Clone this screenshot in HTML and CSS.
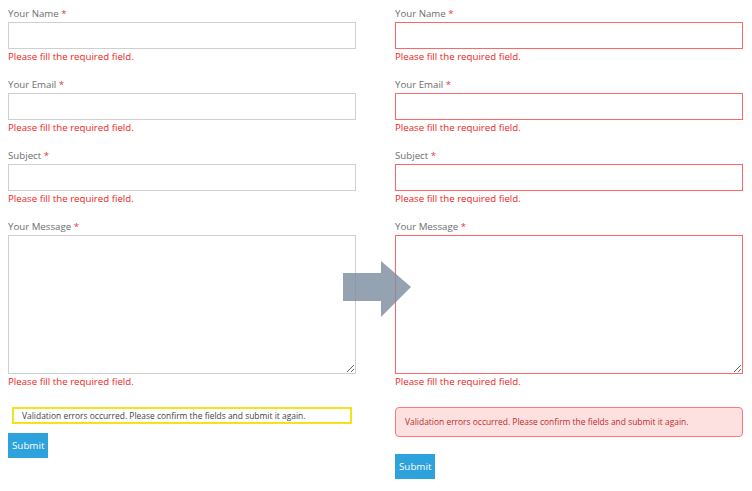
FILE: index.html
```html
<!DOCTYPE html>
<html lang="en">
<head>
  <meta charset="UTF-8">
  <meta name="viewport" content="width=device-width, initial-scale=1.0">
  <title>Contact form validation</title>
  <link rel="stylesheet" href="styles.css">
</head>
<body>
  <div class="compare">

    <!-- Before: default validation look -->
    <form class="contact-form">
      <div class="field">
        <label>Your Name <span class="req">*</span></label>
        <input type="text">
        <span class="field-error">Please fill the required field.</span>
      </div>
      <div class="field">
        <label>Your Email <span class="req">*</span></label>
        <input type="email">
        <span class="field-error">Please fill the required field.</span>
      </div>
      <div class="field">
        <label>Subject <span class="req">*</span></label>
        <input type="text">
        <span class="field-error">Please fill the required field.</span>
      </div>
      <div class="field">
        <label>Your Message <span class="req">*</span></label>
        <textarea></textarea>
        <span class="field-error">Please fill the required field.</span>
      </div>
      <p class="form-response">Validation errors occurred. Please confirm the fields and submit it again.</p>
      <button type="button" class="submit-btn">Submit</button>
    </form>

    <!-- After: styled invalid state -->
    <form class="contact-form contact-form--styled">
      <div class="field">
        <label>Your Name <span class="req">*</span></label>
        <input type="text">
        <span class="field-error">Please fill the required field.</span>
      </div>
      <div class="field">
        <label>Your Email <span class="req">*</span></label>
        <input type="email">
        <span class="field-error">Please fill the required field.</span>
      </div>
      <div class="field">
        <label>Subject <span class="req">*</span></label>
        <input type="text">
        <span class="field-error">Please fill the required field.</span>
      </div>
      <div class="field">
        <label>Your Message <span class="req">*</span></label>
        <textarea></textarea>
        <span class="field-error">Please fill the required field.</span>
      </div>
      <p class="form-response">Validation errors occurred. Please confirm the fields and submit it again.</p>
      <button type="button" class="submit-btn">Submit</button>
    </form>

    <svg class="arrow" width="70" height="58" viewBox="0 0 70 58">
      <polygon points="0,12 38,12 38,0 68,26 38,56 38,40 0,40"/>
    </svg>
  </div>
</body>
</html>
```

FILE: styles.css
```css
body {
  margin: 0;
  background: #fff;
  font-family: "Open Sans", "Liberation Sans", sans-serif;
  font-size: 9.7px;
  color: #777;
}
.compare {
  position: relative;
  display: grid;
  grid-template-columns: 348px 348px;
  column-gap: 39px;
  padding: 6px 8px 0;
}
.contact-form {
  display: flex;
  flex-direction: column;
}
.field {
  display: flex;
  flex-direction: column;
}
.field + .field {
  margin-top: 12px;
}
.field label {
  line-height: 16px;
  color: #6e6e6e;
}
.req {
  color: #e53b3b;
}
.field input, .field textarea {
  box-sizing: border-box;
  width: 100%;
  margin: 0;
  border: 1px solid #cfcfcf;
  background: #fff;
  font-family: inherit;
}
.field input {
  height: 27px;
}
.field textarea {
  height: 139px;
  resize: vertical;
}
.field-error {
  line-height: 16px;
  color: #f01c1c;
}
.form-response {
  margin: 17px 4px 0;
  padding: 0 8px;
  line-height: 13px;
  font-size: 8.45px;
  border: 2px solid #f4e31a;
  color: #444;
}
.submit-btn {
  align-self: flex-start;
  margin-top: 9px;
  height: 25px;
  padding: 0 4px;
  border: none;
  background: #2da2dc;
  color: #fff;
  font-family: inherit;
  font-size: 9.8px;
}

/* styled variant */
.contact-form--styled .field input,
.contact-form--styled .field textarea {
  border-color: #f66;
}
.contact-form--styled .form-response {
  margin: 17px 0 0;
  padding: 0 9px;
  line-height: 28px;
  border: 1px solid #f77;
  border-radius: 4px;
  background: #fde1e1;
  color: #c02a2a;
}
.contact-form--styled .submit-btn {
  margin-top: 17px;
}

.arrow {
  position: absolute;
  left: 343px;
  top: 261px;
}
.arrow polygon {
  fill: #7d8ea1;
  opacity: 0.82;
}
```
